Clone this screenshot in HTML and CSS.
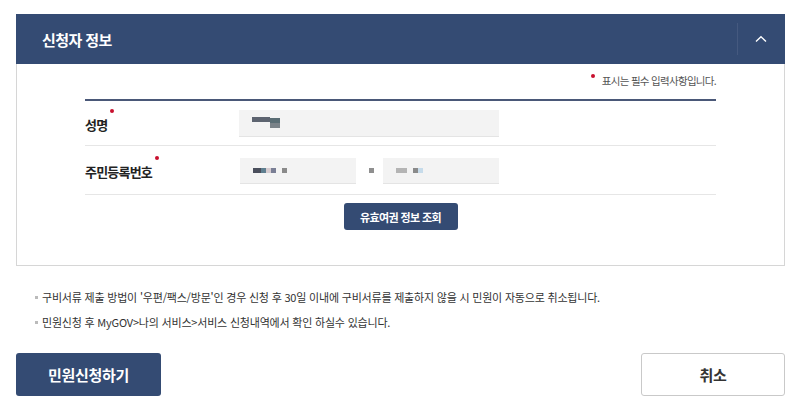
FILE: index.html
```html
<!DOCTYPE html>
<html lang="ko">
<head>
<meta charset="utf-8">
<link rel="stylesheet" href="styles.css">
</head>
<body>
<div class="page">
  <section class="panel">
    <div class="panel-head">
      <h2 class="panel-title">신청자 정보</h2>
      <button class="toggle" aria-label="접기">
        <svg width="12" height="8" viewBox="0 0 12 8"><path d="M1 6.5 L6 1.8 L11 6.5" fill="none" stroke="#fff" stroke-width="1.4"/></svg>
      </button>
    </div>
    <div class="panel-body">
      <p class="req-note"><span class="dot"></span>표시는 필수 입력사항입니다.</p>
      <div class="form-table">
        <div class="row row-first">
          <div class="label">성명<span class="dot dot-label"></span></div>
          <div class="value">
            <div class="input wide">
              <span class="mask m1"></span><span class="mask m2"></span>
            </div>
          </div>
        </div>
        <div class="row">
          <div class="label">주민등록번호<span class="dot dot-label"></span></div>
          <div class="value">
            <div class="input half">
              <span class="pix p-dark"></span><span class="pix p-blue"></span><span class="pix p-light"></span><span class="pix p-mid"></span><span class="pix p-gap"></span><span class="pix p-grey"></span>
            </div>
            <span class="dash"></span>
            <div class="input half">
              <span class="pix p-lgrey wide2"></span><span class="pix p-gap"></span><span class="pix p-grey"></span><span class="pix p-sky"></span>
            </div>
          </div>
        </div>
      </div>
      <div class="actions-inline">
        <button class="btn-small">유효여권 정보 조회</button>
      </div>
    </div>
  </section>

  <ul class="notes">
    <li>구비서류 제출 방법이 '우편/팩스/방문'인 경우 신청 후 30일 이내에 구비서류를 제출하지 않을 시 민원이 자동으로 취소됩니다.</li>
    <li>민원신청 후 MyGOV&gt;나의 서비스&gt;서비스 신청내역에서 확인 하실수 있습니다.</li>
  </ul>

  <div class="actions">
    <button class="btn btn-primary">민원신청하기</button>
    <button class="btn btn-cancel">취소</button>
  </div>
</div>
</body>
</html>
```

FILE: styles.css
```css
* { box-sizing: border-box; }
html, body { margin: 0; padding: 0; background: #fff; }
body {
  font-family: "Noto Sans CJK KR", "Noto Sans", sans-serif;
  color: #222;
}
.page {
  padding: 14px 15px 0 16px;
}
.panel {
  border: 1px solid #d6d6d6;
  border-top: none;
}
.panel-head {
  height: 50px;
  background: #344b73;
  display: flex;
  align-items: center;
  justify-content: space-between;
  margin: 0 -1px;
}
.panel-title {
  margin: 0 0 0 26px;
  color: #fff;
  font-size: 15px;
  font-weight: 700;
  letter-spacing: -0.6px;
}
.toggle {
  width: 47px;
  height: 32px;
  border: none;
  border-left: 1px solid #45597f;
  background: transparent;
  display: flex;
  align-items: center;
  justify-content: center;
  padding: 0;
  margin-right: 1px;
}
.panel-body {
  padding: 0 68px 35px 68px;
}
.req-note {
  margin: 0;
  height: 35px;
  padding-top: 10px;
  text-align: right;
  font-size: 10.5px;
  letter-spacing: -0.7px;
  color: #555;
  line-height: 14px;
}
.dot {
  display: inline-block;
  width: 4px;
  height: 4px;
  border-radius: 50%;
  background: #c8102e;
  vertical-align: top;
  margin-right: 7px;
  margin-top: 0;
}
.form-table {
  border-top: 2px solid #4a5878;
}
.row {
  display: flex;
  align-items: center;
  border-bottom: 1px solid #e6e6e6;
  height: 49px;
}
.row-first { height: 45px; }
.label {
  width: 155px;
  font-size: 13px;
  font-weight: 700;
  color: #222;
  letter-spacing: -0.8px;
  position: relative;
  padding-top: 3px;
}
.dot-label {
  position: relative;
  top: -6px;
  margin-left: 3px;
  margin-right: 0;
}
.value {
  display: flex;
  align-items: center;
  gap: 0;
}
.input {
  background: #f3f3f3;
  border-bottom: 1px solid #e4e4e4;
  display: flex;
  align-items: center;
  padding-left: 13px;
}
.input.wide { width: 260px; height: 27px; margin-left: -1px; }
.input.half { width: 116px; height: 26px; margin-top: 1px; }
.mask { display: inline-block; }
.m1 { width: 18px; height: 5px; background: #5d6470; margin-top: -6px; }
.m2 { width: 10px; height: 10px; background: linear-gradient(#5a6d74 0 5px, #7a8288 5px); margin-top: 0px; }
.pix { display: inline-block; height: 5px; width: 5px; }
.p-dark { width: 8px; background: #4a4f5c; }
.p-blue { background: #5f7f90; }
.p-light { background: #d6ccd0; }
.p-mid { background: #7a7f95; }
.p-gap { width: 6px; background: transparent; }
.p-grey { background: #8a8a8a; }
.p-lgrey { background: #b4b4b4; }
.wide2 { width: 11px; }
.p-sky { background: #c6dbea; }
.dash {
  width: 5px; height: 5px; background: #8f8f8f;
  margin: 0 9px 0 13px;
}
.actions-inline {
  display: flex;
  justify-content: center;
  padding-top: 8px;
}
.btn-small {
  width: 114px;
  height: 27px;
  background: #344b73;
  color: #fff;
  border: none;
  border-radius: 3px;
  font-family: inherit;
  font-size: 11px;
  font-weight: 700;
  letter-spacing: -0.6px;
  padding: 0;
  margin-left: 0;
}
.notes {
  list-style: none;
  margin: 0;
  padding: 19px 0 0 26px;
}
.notes li {
  position: relative;
  font-size: 11px;
  line-height: 25px;
  color: #333;
  letter-spacing: -0.2px;
}
.notes li::before {
  content: "";
  position: absolute;
  left: -7px;
  top: 11px;
  width: 3px;
  height: 3px;
  background: #bbb;
}
.actions {
  display: flex;
  justify-content: space-between;
  margin-top: 18px;
}
.btn {
  width: 145px;
  height: 43px;
  font-family: inherit;
  font-size: 15px;
  border-radius: 3px;
  letter-spacing: -0.3px;
  padding: 0;
}
.btn-primary {
  background: #344b73;
  color: #fff;
  border: none;
  font-weight: 700;
}
.btn-cancel {
  width: 144px;
  background: #fff;
  color: #333;
  border: 1px solid #c9c9c9;
  font-weight: 700;
}
```
